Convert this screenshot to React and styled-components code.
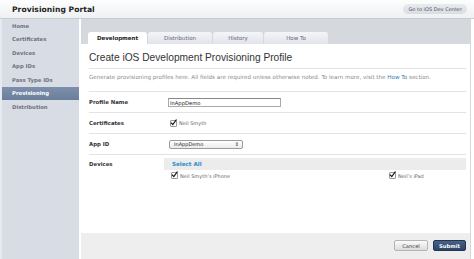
import React from "react";
import styled, { createGlobalStyle } from "styled-components";

const Global = createGlobalStyle`
  html, body { margin: 0; padding: 0; background: #fff; }
  body { font-family: "DejaVu Sans", "Liberation Sans", sans-serif; }
`;

const Page = styled.div`
  width: 474px;
  height: 259px;
  display: flex;
  flex-direction: column;
  overflow: hidden;
  background: #fff;
`;

const Header = styled.div`
  height: 19px;
  flex: none;
  display: flex;
  align-items: center;
  justify-content: space-between;
  padding: 0 7px 0 12px;
  background: linear-gradient(#fdfdfd, #eef0f2);
  border-bottom: 1px solid #c9ccd1;
  box-sizing: border-box;
`;

const Brand = styled.div`
  font-size: 7.6px;
  font-weight: bold;
  color: #222;
  letter-spacing: 0.05px;
`;

const DevCenter = styled.div`
  font-size: 5px;
  color: #4a5160;
  background: linear-gradient(#e9ebee, #d9dce1);
  border-radius: 5px;
  padding: 2px 5px;
  margin-top: -1px;
`;

const Body = styled.div`
  flex: 1;
  display: flex;
  min-height: 0;
`;

const Sidebar = styled.div`
  width: 79px;
  flex: none;
  background: #d8dce4;
  border-left: 2px solid #e6e9ee;
  box-sizing: border-box;
  display: flex;
  flex-direction: column;
`;

const NavItem = styled.div`
  height: 13.5px;
  display: flex;
  align-items: center;
  padding-left: 10px;
  font-size: 5.3px;
  font-weight: bold;
  color: ${(p) => (p.$active ? "#fff" : "#70747d")};
  background: ${(p) => (p.$active ? "linear-gradient(#7d8fab, #6a7e9c)" : "transparent")};
`;

const Main = styled.div`
  flex: 1;
  display: flex;
  flex-direction: column;
  margin-left: 2px;
  margin-right: 3px;
  border-right: 1px solid #d6d8db;
`;

const TabBar = styled.div`
  height: 25px;
  flex: none;
  background: #d5d8dc;
  display: flex;
  align-items: flex-end;
  padding-left: 7px;
  gap: 1px;
`;

const Tab = styled.div`
  width: ${(p) => p.$w}px;
  height: 12px;
  display: flex;
  align-items: center;
  justify-content: center;
  font-size: 5.5px;
  font-weight: ${(p) => (p.$active ? "bold" : "normal")};
  color: ${(p) => (p.$active ? "#222" : "#5c6884")};
  background: ${(p) => (p.$active ? "#fff" : "linear-gradient(#f4f5f8, #e1e3e9)")};
  border-radius: 3px 3px 0 0;
  box-sizing: border-box;
`;

const Content = styled.div`
  flex: 1;
  padding: 8px 4px 0 8px;
  display: flex;
  flex-direction: column;
`;

const Title = styled.div`
  font-family: "Liberation Sans", "DejaVu Sans", sans-serif;
  font-size: 10.2px;
  color: #333;
  height: 12px;
  line-height: 12px;
  padding-bottom: 4px;
  border-bottom: 1px solid #e3e3e3;
`;

const Desc = styled.div`
  font-size: 5.6px;
  color: #8a8a8a;
  height: 22px;
  line-height: 16px;
  border-bottom: 1px solid #e3e3e3;
  white-space: nowrap;
`;

const Link = styled.span`
  color: #2a7fb8;
`;

const Row = styled.div`
  display: flex;
  align-items: ${(p) => (p.$top ? "flex-start" : "center")};
  height: ${(p) => p.$h}px;
  border-bottom: ${(p) => (p.$last ? "none" : "1px solid #e3e3e3")};
  box-sizing: border-box;
`;

const Label = styled.div`
  width: 79px;
  flex: none;
  font-size: 5.4px;
  font-weight: bold;
  color: #333;
  padding-top: ${(p) => (p.$top ? "6px" : "0")};
`;

const TextInput = styled.div`
  width: 110px;
  height: 7px;
  border: 1px solid #a9a9a9;
  border-top-color: #888;
  font-size: 5.2px;
  color: #222;
  display: flex;
  align-items: center;
  padding-left: 1px;
  margin-top: 1px;
`;

const Check = styled.span`
  display: inline-flex;
  align-items: center;
  gap: 2px;
  font-size: 5px;
  color: #666;
  margin-left: ${(p) => p.$ml || 0}px;
`;

const Box = styled.span`
  width: 5px;
  height: 5px;
  border: 1px solid #9a9a9a;
  border-radius: 1px;
  background: #fff;
  position: relative;
  display: inline-block;
`;

const Tick = () => (
  <svg width="7" height="7" viewBox="0 0 7 7" style={{ position: "absolute", left: -1, top: -2 }}>
    <path d="M1 3.6 L2.8 5.6 L6.5 0.5" stroke="#111" strokeWidth="1.2" fill="none" />
  </svg>
);

const Select = styled.div`
  width: 65px;
  height: 7px;
  border: 1px solid #9b9b9b;
  border-radius: 2px;
  background: linear-gradient(#ffffff, #ebebeb);
  display: flex;
  align-items: center;
  justify-content: space-between;
  padding: 0 3px 0 4px;
  margin-left: 1px;
  font-size: 5px;
  color: #222;
`;

const DevicesCol = styled.div`
  flex: 1;
  display: flex;
  flex-direction: column;
  margin-left: -4px;
  padding-top: 3px;
`;

const SelectAllBar = styled.div`
  height: 12px;
  background: #ececec;
  display: flex;
  align-items: center;
  padding-left: 8px;
  font-size: 5.6px;
  font-weight: bold;
  color: #2f8dc8;
`;

const DeviceRow = styled.div`
  display: grid;
  grid-template-columns: 218px 1fr;
  padding-left: 7px;
  padding-top: 2px;
`;

const Footer = styled.div`
  height: 26px;
  flex: none;
  background: #eeeeee;
  display: flex;
  align-items: flex-start;
  justify-content: flex-end;
  gap: 5px;
  padding: 7px 4px 0 0;
  box-sizing: border-box;
`;

const Button = styled.div`
  width: ${(p) => p.$w}px;
  height: 9px;
  border-radius: 2px;
  display: flex;
  align-items: center;
  justify-content: center;
  font-size: 5.2px;
  font-weight: ${(p) => (p.$primary ? "bold" : "normal")};
  color: ${(p) => (p.$primary ? "#fff" : "#444")};
  background: ${(p) => (p.$primary ? "linear-gradient(#4a6287, #2d4368)" : "linear-gradient(#fbfbfb, #dcdcdc)")};
  border: 1px solid ${(p) => (p.$primary ? "#223556" : "#b5b5b5")};
`;

const nav = ["Home", "Certificates", "Devices", "App IDs", "Pass Type IDs", "Provisioning", "Distribution"];

export default function App() {
  return (
    <Page>
      <Global />
      <Header>
        <Brand>Provisioning Portal</Brand>
        <DevCenter>Go to iOS Dev Center</DevCenter>
      </Header>
      <Body>
        <Sidebar>
          {nav.map((n) => (
            <NavItem key={n} $active={n === "Provisioning"}>{n}</NavItem>
          ))}
        </Sidebar>
        <Main>
          <TabBar>
            <Tab $w={59} $active>Development</Tab>
            <Tab $w={64}>Distribution</Tab>
            <Tab $w={50}>History</Tab>
            <Tab $w={64}>How To</Tab>
          </TabBar>
          <Content>
            <Title>Create iOS Development Provisioning Profile</Title>
            <Desc>
              Generate provisioning profiles here. All fields are required unless otherwise noted. To learn more, visit the <Link>How To</Link> section.
            </Desc>
            <Row $h={21}>
              <Label>Profile Name</Label>
              <TextInput>InAppDemo</TextInput>
            </Row>
            <Row $h={21}>
              <Label>Certificates</Label>
              <Check $ml={2}><Box><Tick /></Box>Neil Smyth</Check>
            </Row>
            <Row $h={21}>
              <Label>App ID</Label>
              <Select><span>InAppDemo</span><span>⇕</span></Select>
            </Row>
            <Row $h={30} $top $last>
              <Label $top>Devices</Label>
              <DevicesCol>
                <SelectAllBar>Select All</SelectAllBar>
                <DeviceRow>
                  <Check><Box><Tick /></Box>Neil Smyth’s iPhone</Check>
                  <Check><Box><Tick /></Box>Neil’s iPad</Check>
                </DeviceRow>
              </DevicesCol>
            </Row>
          </Content>
          <Footer>
            <Button $w={32}>Cancel</Button>
            <Button $w={31} $primary>Submit</Button>
          </Footer>
        </Main>
      </Body>
    </Page>
  );
}
